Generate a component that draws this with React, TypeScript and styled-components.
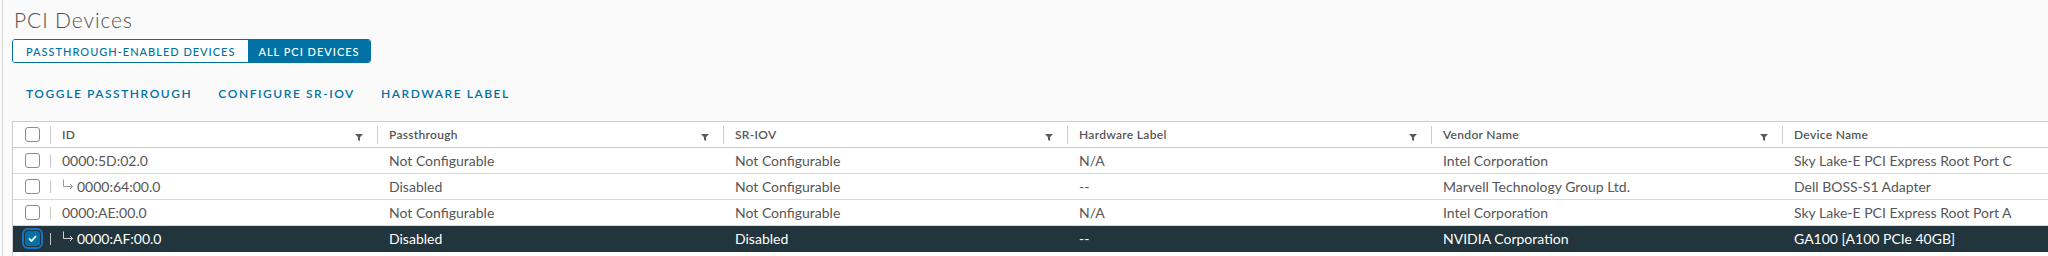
import styled, { createGlobalStyle } from 'styled-components';

const GlobalStyle = createGlobalStyle`
  html, body {
    margin: 0;
    padding: 0;
    background: #fafafa;
    font-family: Lato, "Open Sans", sans-serif;
    overflow: hidden;
  }
`;

type Device = {
  id: string;
  child?: boolean;
  passthrough: string;
  sriov: string;
  label: string;
  vendor: string;
  device: string;
  selected?: boolean;
};

const devices: Device[] = [
  {
    id: '0000:5D:02.0',
    passthrough: 'Not Configurable',
    sriov: 'Not Configurable',
    label: 'N/A',
    vendor: 'Intel Corporation',
    device: 'Sky Lake-E PCI Express Root Port C',
  },
  {
    id: '0000:64:00.0',
    child: true,
    passthrough: 'Disabled',
    sriov: 'Not Configurable',
    label: '--',
    vendor: 'Marvell Technology Group Ltd.',
    device: 'Dell BOSS-S1 Adapter',
  },
  {
    id: '0000:AE:00.0',
    passthrough: 'Not Configurable',
    sriov: 'Not Configurable',
    label: 'N/A',
    vendor: 'Intel Corporation',
    device: 'Sky Lake-E PCI Express Root Port A',
  },
  {
    id: '0000:AF:00.0',
    child: true,
    passthrough: 'Disabled',
    sriov: 'Disabled',
    label: '--',
    vendor: 'NVIDIA Corporation',
    device: 'GA100 [A100 PCIe 40GB]',
    selected: true,
  },
];

const headers = ['ID', 'Passthrough', 'SR-IOV', 'Hardware Label', 'Vendor Name', 'Device Name'];

const FilterIcon = () => (
  <svg width="8" height="7" viewBox="0 0 8 7">
    <path d="M0 0H8L5 3.3V7L3 6V3.3Z" fill="#5a5a5a" />
  </svg>
);

const TreeArrow = ({ light }: { light?: boolean }) => (
  <svg width="12" height="11" viewBox="0 0 12 11">
    <path
      d="M1.5 0.5V7.5H10.5M8 5L10.5 7.5L8 10"
      fill="none"
      stroke={light ? '#d0d6d9' : '#9a9a9a'}
      strokeWidth="1"
    />
  </svg>
);

const CheckBox = ({ checked }: { checked?: boolean }) => (
  <Box checked={checked}>
    {checked && (
      <svg width="9" height="7" viewBox="0 0 9 7">
        <path d="M1 3.5L3.5 6L8 1" fill="none" stroke="#fff" strokeWidth="1.8" />
      </svg>
    )}
  </Box>
);

export default function App() {
  return (
    <>
      <GlobalStyle />
      <Page>
        <Title>PCI Devices</Title>
        <SegGroup>
          <SegButton>Passthrough-enabled devices</SegButton>
          <SegButton active>All PCI devices</SegButton>
        </SegGroup>
        <ActionBar>
          <ActionLink>Toggle passthrough</ActionLink>
          <ActionLink>Configure SR-IOV</ActionLink>
          <ActionLink>Hardware label</ActionLink>
        </ActionBar>
        <Grid>
          <HeaderRow>
            <SelectCell>
              <CheckBox />
            </SelectCell>
            {headers.map((h, i) => (
              <HeaderCell key={h}>
                <span>{h}</span>
                {i < headers.length - 1 && <FilterIcon />}
              </HeaderCell>
            ))}
          </HeaderRow>
          {devices.map((d) => (
            <Row key={d.id} selected={d.selected}>
              <SelectCell>
                <CheckBox checked={d.selected} />
              </SelectCell>
              <IdCell>
                {d.child && <TreeArrow light={d.selected} />}
                <span>{d.id}</span>
              </IdCell>
              <Cell>{d.passthrough}</Cell>
              <Cell>{d.sriov}</Cell>
              <Cell>{d.label}</Cell>
              <Cell>{d.vendor}</Cell>
              <Cell>{d.device}</Cell>
            </Row>
          ))}
          <Filler />
        </Grid>
      </Page>
    </>
  );
}

const columns = '37px 327px 346px 344px 364px 351px 340px';

const Page = styled.div`
  margin-left: 2px;
  border-left: 1px solid #d6d6d6;
  padding: 6px 0 0 9px;
  height: 256px;
  box-sizing: border-box;
  overflow: hidden;
`;

const Title = styled.h2`
  margin: 0 0 5px 2px;
  font-size: 21px;
  line-height: 28px;
  font-weight: 300;
  letter-spacing: 0.9px;
  color: #4f4f4f;
`;

const SegGroup = styled.div`
  display: inline-flex;
  border: 1px solid #0072a3;
  border-radius: 3px;
  overflow: hidden;
  height: 24px;
  box-sizing: border-box;
`;

const SegButton = styled.div<{ active?: boolean }>`
  display: flex;
  align-items: center;
  padding: ${({ active }) => (active ? '0 10px' : '0 13px')};
  font-size: 11px;
  font-weight: 500;
  letter-spacing: 1px;
  text-transform: uppercase;
  background: ${({ active }) => (active ? '#0072a3' : '#fff')};
  color: ${({ active }) => (active ? '#fff' : '#0072a3')};
`;

const ActionBar = styled.div`
  display: flex;
  gap: 26px;
  margin-top: 18px;
  padding-left: 14px;
  height: 24px;
  align-items: center;
`;

const ActionLink = styled.div`
  font-size: 12px;
  font-weight: 600;
  letter-spacing: 1.55px;
  text-transform: uppercase;
  color: #0072a3;
`;

const Grid = styled.div`
  margin-top: 16px;
  width: 2120px;
  border-top: 1px solid #cccccc;
  border-left: 1px solid #cccccc;
  background: #fff;
  display: flex;
  flex-direction: column;
`;

const HeaderRow = styled.div`
  display: grid;
  grid-template-columns: ${columns};
  height: 26px;
  border-bottom: 1px solid #cccccc;
  box-sizing: border-box;
`;

const Row = styled.div<{ selected?: boolean }>`
  display: grid;
  grid-template-columns: ${columns};
  height: 26px;
  border-bottom: 1px solid ${({ selected }) => (selected ? '#22343c' : '#d7d7d7')};
  box-sizing: border-box;
  background: ${({ selected }) => (selected ? '#22343c' : '#fff')};
  color: ${({ selected }) => (selected ? '#fff' : '#565656')};
`;

const SelectCell = styled.div`
  display: flex;
  align-items: center;
  padding-left: 12px;
`;

const Separated = styled.div`
  position: relative;
  display: flex;
  align-items: center;
  padding: 0 14px 0 12px;
  box-sizing: border-box;
  &::before {
    content: '';
    position: absolute;
    left: 0;
    top: 50%;
    width: 1px;
    background: #cccccc;
  }
`;

const HeaderCell = styled(Separated)`
  justify-content: space-between;
  font-size: 12px;
  font-weight: 600;
  letter-spacing: 0.3px;
  color: #565656;
  svg {
    margin-top: 5px;
  }
  &::before {
    height: 18px;
    margin-top: -9px;
  }
`;

const Cell = styled.div`
  display: flex;
  align-items: center;
  padding-left: 12px;
  font-size: 14px;
  white-space: nowrap;
`;

const IdCell = styled(Separated)`
  font-size: 14px;
  gap: 3px;
  &::before {
    height: 12px;
    margin-top: -6px;
    background: #c4c4c4;
  }
  svg {
    margin-top: -4px;
  }
`;

const Box = styled.div<{ checked?: boolean }>`
  width: 15px;
  height: 15px;
  box-sizing: border-box;
  border-radius: 3px;
  display: flex;
  align-items: center;
  justify-content: center;
  border: 1px solid ${({ checked }) => (checked ? '#0072a3' : '#8c8c8c')};
  background: ${({ checked }) => (checked ? '#0072a3' : '#fff')};
  outline: ${({ checked }) => (checked ? '2px solid #1b6fc9' : 'none')};
  outline-offset: 1px;
`;

const Filler = styled.div`
  height: 20px;
`;
